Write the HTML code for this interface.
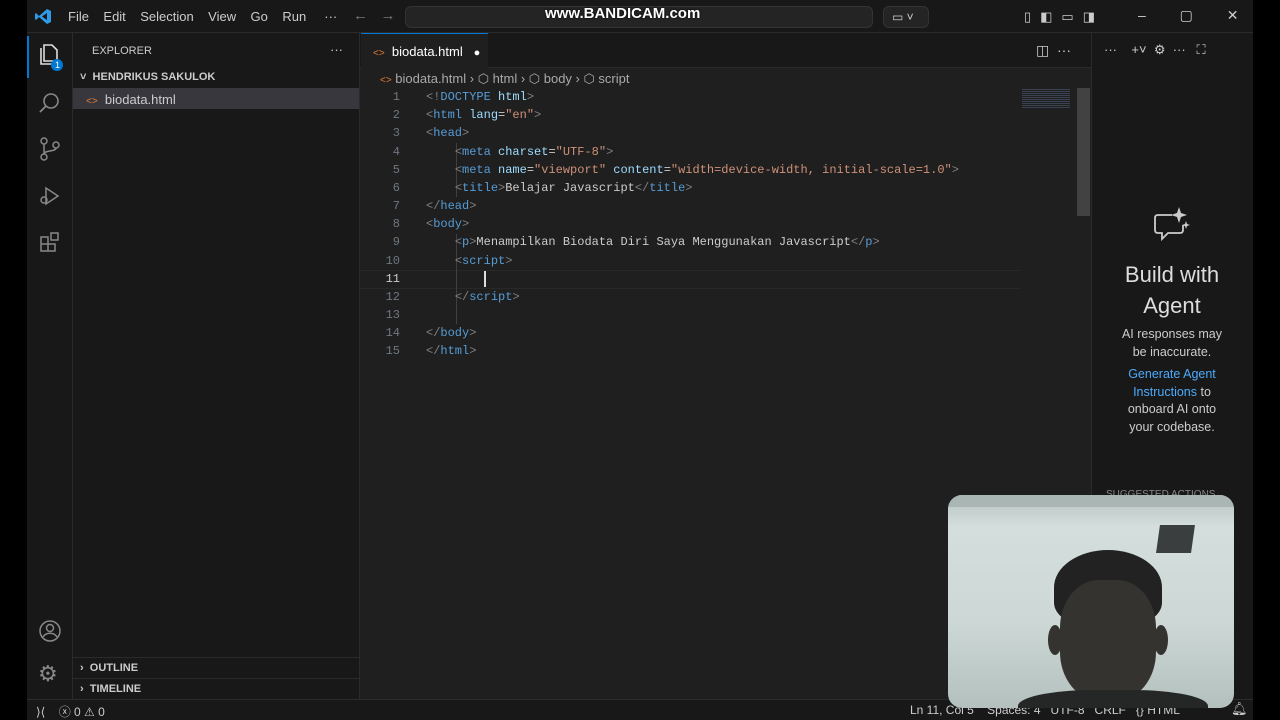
<!DOCTYPE html>
<html><head><meta charset="utf-8"><style>
*{box-sizing:border-box;margin:0;padding:0}
body{width:1280px;height:720px;background:#000;position:relative;overflow:hidden;font-family:"Liberation Sans",sans-serif;color:#ccc;font-size:13px}
.a{position:absolute}
.mono{font-family:"Liberation Mono",monospace;font-size:12px}
.ln{position:absolute;left:380px;width:20px;text-align:right;color:#6e7681}
.cl{position:absolute;left:426px;white-space:pre;color:#ccc}
.t{color:#808080}.k{color:#569cd6}.at{color:#9cdcfe}.s{color:#ce9178}
</style></head><body>
<div class="a" style="left:27px;top:0;width:1226px;height:33px;background:#181818;border-bottom:1px solid #2b2b2b"></div>
<svg class="a" style="left:35px;top:8px" width="17" height="17" viewBox="0 0 17 17"><path d="M12 1 L16 3 V14 L12 16 L4 9 L1 12 L0 11 V6 L1 5 L4 8 L12 1Z M12 5 L7 8.5 L12 12Z" fill="#2f9be8" fill-rule="evenodd"/></svg>
<div class="a" style="left:68px;top:9px;font-size:13px;color:#ccc">File&nbsp;&nbsp;&nbsp;&nbsp;Edit&nbsp;&nbsp;&nbsp;&nbsp;Selection&nbsp;&nbsp;&nbsp;&nbsp;View&nbsp;&nbsp;&nbsp;&nbsp;Go&nbsp;&nbsp;&nbsp;&nbsp;Run&nbsp;&nbsp;&nbsp;&nbsp;&nbsp;···</div>
<div class="a" style="left:353px;top:7px;color:#777;font-size:15px">←&nbsp;&nbsp;&nbsp;→</div>
<div class="a" style="left:405px;top:6px;width:468px;height:22px;background:#242424;border:1px solid #333;border-radius:6px"></div>
<div class="a" style="left:545px;top:5px;color:#fff;font-weight:bold;font-size:15px;text-shadow:0 0 2px #000">www.BANDICAM.com</div>
<div class="a" style="left:883px;top:6px;width:46px;height:22px;background:#242424;border:1px solid #333;border-radius:6px;color:#ccc;font-size:12px;padding:3px 0 0 8px">▭ ˅</div>
<div class="a" style="left:1024px;top:9px;color:#ccc;font-size:13px;letter-spacing:9px">▯◧▭◨</div>
<div class="a" style="left:1138px;top:7px;color:#ccc;font-size:14px;word-spacing:30px">–&nbsp;▢&nbsp;✕</div>
<div class="a" style="left:27px;top:33px;width:46px;height:666px;background:#181818;border-right:1px solid #2b2b2b"></div>
<div class="a" style="left:27px;top:36px;width:2px;height:42px;background:#0078d4"></div>
<svg class="a" style="left:37px;top:42px" width="26" height="30"><path d="M4 6 V22 H15 M7 3 H15 L20 8 V19 H7Z" fill="none" stroke="#ddd" stroke-width="1.6"/><circle cx="20" cy="23" r="6" fill="#0078d4"/><text x="18" y="26" font-size="9" fill="#fff" font-family="Liberation Sans">1</text></svg>
<svg class="a" style="left:38px;top:91px" width="24" height="24"><circle cx="13" cy="10" r="7" fill="none" stroke="#888" stroke-width="1.6"/><path d="M8 15 L2 21" stroke="#888" stroke-width="1.8"/></svg>
<svg class="a" style="left:38px;top:136px" width="24" height="26"><circle cx="6" cy="5" r="3" fill="none" stroke="#888" stroke-width="1.5"/><circle cx="6" cy="21" r="3" fill="none" stroke="#888" stroke-width="1.5"/><circle cx="18" cy="9" r="3" fill="none" stroke="#888" stroke-width="1.5"/><path d="M6 8 V18 M18 12 C18 16 6 14 6 18" fill="none" stroke="#888" stroke-width="1.5"/></svg>
<svg class="a" style="left:38px;top:184px" width="24" height="24"><path d="M8 4 L20 12 L8 20Z" fill="none" stroke="#888" stroke-width="1.5"/><circle cx="6" cy="16" r="3" fill="none" stroke="#888" stroke-width="1.5"/></svg>
<svg class="a" style="left:38px;top:230px" width="24" height="24"><path d="M3 7 H10 V14 H3Z M3 14 H10 V21 H3Z M10 14 H17 V21 H10Z M13 3 H20 V10 H13Z" fill="none" stroke="#888" stroke-width="1.5"/></svg>
<svg class="a" style="left:38px;top:619px" width="24" height="24"><circle cx="12" cy="12" r="10" fill="none" stroke="#888" stroke-width="1.5"/><circle cx="12" cy="9" r="3.5" fill="none" stroke="#888" stroke-width="1.5"/><path d="M5 18 C8 13 16 13 19 18" fill="none" stroke="#888" stroke-width="1.5"/></svg>
<div class="a" style="left:38px;top:661px;color:#888;font-size:22px">⚙</div>
<div class="a" style="left:73px;top:33px;width:287px;height:666px;background:#181818;border-right:1px solid #2b2b2b"></div>
<div class="a" style="left:92px;top:45px;font-size:11px;color:#ccc">EXPLORER</div>
<div class="a" style="left:330px;top:42px;color:#ccc">···</div>
<div class="a" style="left:80px;top:71px;font-size:11px;font-weight:bold;color:#ccc">˅&nbsp; HENDRIKUS SAKULOK</div>
<div class="a" style="left:73px;top:88px;width:286px;height:21px;background:#37373d"></div>
<div class="a" style="left:86px;top:92px;font-size:13px;color:#ccc"><span style="color:#e37933;font-size:10px">&lt;&gt;</span>&nbsp; biodata.html</div>
<div class="a" style="left:73px;top:657px;width:286px;height:1px;background:#2b2b2b"></div>
<div class="a" style="left:80px;top:662px;font-size:11px;font-weight:bold;color:#ccc">›&nbsp; OUTLINE</div>
<div class="a" style="left:73px;top:678px;width:286px;height:1px;background:#2b2b2b"></div>
<div class="a" style="left:80px;top:683px;font-size:11px;font-weight:bold;color:#ccc">›&nbsp; TIMELINE</div>
<div class="a" style="left:360px;top:33px;width:731px;height:666px;background:#1f1f1f"></div>
<div class="a" style="left:360px;top:33px;width:731px;height:35px;background:#181818;border-bottom:1px solid #2b2b2b"></div>
<div class="a" style="left:361px;top:33px;width:127px;height:35px;background:#1f1f1f;border-top:1px solid #0078d4"></div>
<div class="a" style="left:373px;top:44px;font-size:13px;color:#fff"><span style="color:#e37933;font-size:10px">&lt;&gt;</span>&nbsp; biodata.html&nbsp;&nbsp;&nbsp;<span style="font-size:11px">●</span></div>
<div class="a" style="left:1036px;top:42px;color:#ccc;font-size:14px">◫&nbsp;&nbsp;···</div>
<div class="a" style="left:380px;top:71px;font-size:13px;color:#a9a9a9"><span style="color:#e37933;font-size:10px">&lt;&gt;</span> biodata.html › <span style="color:#aaa">⬡</span> html › ⬡ body › ⬡ script</div>
<div class="a" style="left:360px;top:270px;width:660px;height:19px;border-top:1px solid #282828;border-bottom:1px solid #282828"></div>
<div class="a" style="left:456px;top:143px;width:1px;height:54px;background:#404040"></div>
<div class="a" style="left:456px;top:234px;width:1px;height:90px;background:#404040"></div>
<div class="a" style="left:484px;top:271px;width:2px;height:16px;background:#ddd"></div>
<div class="mono">
<div class="ln" style="top:90px">1</div><div class="cl" style="top:90px"><span class="t">&lt;!</span><span class="k">DOCTYPE</span> <span class="at">html</span><span class="t">&gt;</span></div>
<div class="ln" style="top:108px">2</div><div class="cl" style="top:108px"><span class="t">&lt;</span><span class="k">html</span> <span class="at">lang</span>=<span class="s">"en"</span><span class="t">&gt;</span></div>
<div class="ln" style="top:126px">3</div><div class="cl" style="top:126px"><span class="t">&lt;</span><span class="k">head</span><span class="t">&gt;</span></div>
<div class="ln" style="top:145px">4</div><div class="cl" style="top:145px">    <span class="t">&lt;</span><span class="k">meta</span> <span class="at">charset</span>=<span class="s">"UTF-8"</span><span class="t">&gt;</span></div>
<div class="ln" style="top:163px">5</div><div class="cl" style="top:163px">    <span class="t">&lt;</span><span class="k">meta</span> <span class="at">name</span>=<span class="s">"viewport"</span> <span class="at">content</span>=<span class="s">"width=device-width, initial-scale=1.0"</span><span class="t">&gt;</span></div>
<div class="ln" style="top:181px">6</div><div class="cl" style="top:181px">    <span class="t">&lt;</span><span class="k">title</span><span class="t">&gt;</span>Belajar Javascript<span class="t">&lt;/</span><span class="k">title</span><span class="t">&gt;</span></div>
<div class="ln" style="top:199px">7</div><div class="cl" style="top:199px"><span class="t">&lt;/</span><span class="k">head</span><span class="t">&gt;</span></div>
<div class="ln" style="top:217px">8</div><div class="cl" style="top:217px"><span class="t">&lt;</span><span class="k">body</span><span class="t">&gt;</span></div>
<div class="ln" style="top:235px">9</div><div class="cl" style="top:235px">    <span class="t">&lt;</span><span class="k">p</span><span class="t">&gt;</span>Menampilkan Biodata Diri Saya Menggunakan Javascript<span class="t">&lt;/</span><span class="k">p</span><span class="t">&gt;</span></div>
<div class="ln" style="top:254px">10</div><div class="cl" style="top:254px">    <span class="t">&lt;</span><span class="k">script</span><span class="t">&gt;</span></div>
<div class="ln" style="top:272px;color:#ccc">11</div>
<div class="ln" style="top:290px">12</div><div class="cl" style="top:290px">    <span class="t">&lt;/</span><span class="k">script</span><span class="t">&gt;</span></div>
<div class="ln" style="top:308px">13</div>
<div class="ln" style="top:326px">14</div><div class="cl" style="top:326px"><span class="t">&lt;/</span><span class="k">body</span><span class="t">&gt;</span></div>
<div class="ln" style="top:344px">15</div><div class="cl" style="top:344px"><span class="t">&lt;/</span><span class="k">html</span><span class="t">&gt;</span></div>
</div>
<div class="a" style="left:1022px;top:88px;width:48px;height:20px;background:repeating-linear-gradient(#1f1f1f 0 1px,#4a5a70 1px 2px);opacity:.6"></div>
<div class="a" style="left:1077px;top:88px;width:13px;height:128px;background:#424242"></div>
<div class="a" style="left:1091px;top:33px;width:162px;height:666px;background:#181818;border-left:1px solid #2b2b2b"></div>
<div class="a" style="left:1104px;top:42px;color:#ccc;font-size:13px">···&nbsp;&nbsp;&nbsp;&nbsp;+˅&nbsp;&nbsp;⚙&nbsp;&nbsp;···&nbsp;&nbsp;&nbsp;⛶</div>
<svg class="a" style="left:1152px;top:205px" width="40" height="40"><path d="M20 10 H6 Q3 10 3 13 V25 Q3 28 6 28 H10 V34 L16 28 H28 Q31 28 31 25 V20" fill="none" stroke="#ccc" stroke-width="1.8"/><path d="M27 2 L29 8 L35 10 L29 12 L27 18 L25 12 L19 10 L25 8Z" fill="#ccc"/><path d="M34 16 L35 19 L38 20 L35 21 L34 24 L33 21 L30 20 L33 19Z" fill="#ccc"/></svg>
<div class="a" style="left:1091px;top:259px;width:162px;text-align:center;font-size:22px;color:#ddd;line-height:31px">Build with<br>Agent</div>
<div class="a" style="left:1091px;top:326px;width:162px;text-align:center;font-size:12.5px;color:#ccc;line-height:17.5px">AI responses may<br>be inaccurate.</div>
<div class="a" style="left:1091px;top:366px;width:162px;text-align:center;font-size:12.5px;color:#ccc;line-height:17.5px"><span style="color:#4daafc">Generate Agent<br>Instructions</span> to<br>onboard AI onto<br>your codebase.</div>
<div class="a" style="left:1106px;top:489px;font-size:10px;color:#888">SUGGESTED ACTIONS</div>
<div class="a" style="left:27px;top:699px;width:1226px;height:21px;background:#181818;border-top:1px solid #2b2b2b"></div>
<div class="a" style="left:36px;top:703px;font-size:12px;color:#ccc">⟩⟨&nbsp;&nbsp;&nbsp;&nbsp;ⓧ 0 ⚠ 0</div>
<div class="a" style="left:910px;top:703px;font-size:12px;color:#ccc">Ln 11, Col 5&nbsp;&nbsp;&nbsp;&nbsp;Spaces: 4&nbsp;&nbsp;&nbsp;UTF-8&nbsp;&nbsp;&nbsp;CRLF&nbsp;&nbsp;&nbsp;{} HTML</div>
<div class="a" style="left:1231px;top:701px;font-size:13px;color:#ccc">🔔︎</div>
<div class="a" style="left:948px;top:495px;width:286px;height:213px;border-radius:14px;overflow:hidden;background:linear-gradient(180deg,#b8c4c2 0%,#d4dedc 15%,#cdd8d6 60%,#b3c0be 100%)">
<div class="a" style="left:0;top:0;width:286px;height:12px;background:#aab6b4"></div>
<div class="a" style="left:100px;top:70px;width:60px;height:60px;border-radius:50%;background:radial-gradient(#ffffff 0%,rgba(255,255,255,0) 70%)"></div>
<div class="a" style="left:210px;top:30px;width:35px;height:28px;background:#3a3e3e;transform:skew(-8deg)"></div>
<div class="a" style="left:106px;top:55px;width:108px;height:75px;border-radius:50% 50% 30% 30%;background:#222"></div>
<div class="a" style="left:112px;top:85px;width:96px;height:120px;border-radius:40%;background:#34332f"></div>
<div class="a" style="left:100px;top:130px;width:14px;height:30px;border-radius:50%;background:#34332f"></div>
<div class="a" style="left:206px;top:130px;width:14px;height:30px;border-radius:50%;background:#34332f"></div>
<div class="a" style="left:70px;top:195px;width:190px;height:40px;border-radius:40%;background:#252626"></div>
</div>
</body></html>
